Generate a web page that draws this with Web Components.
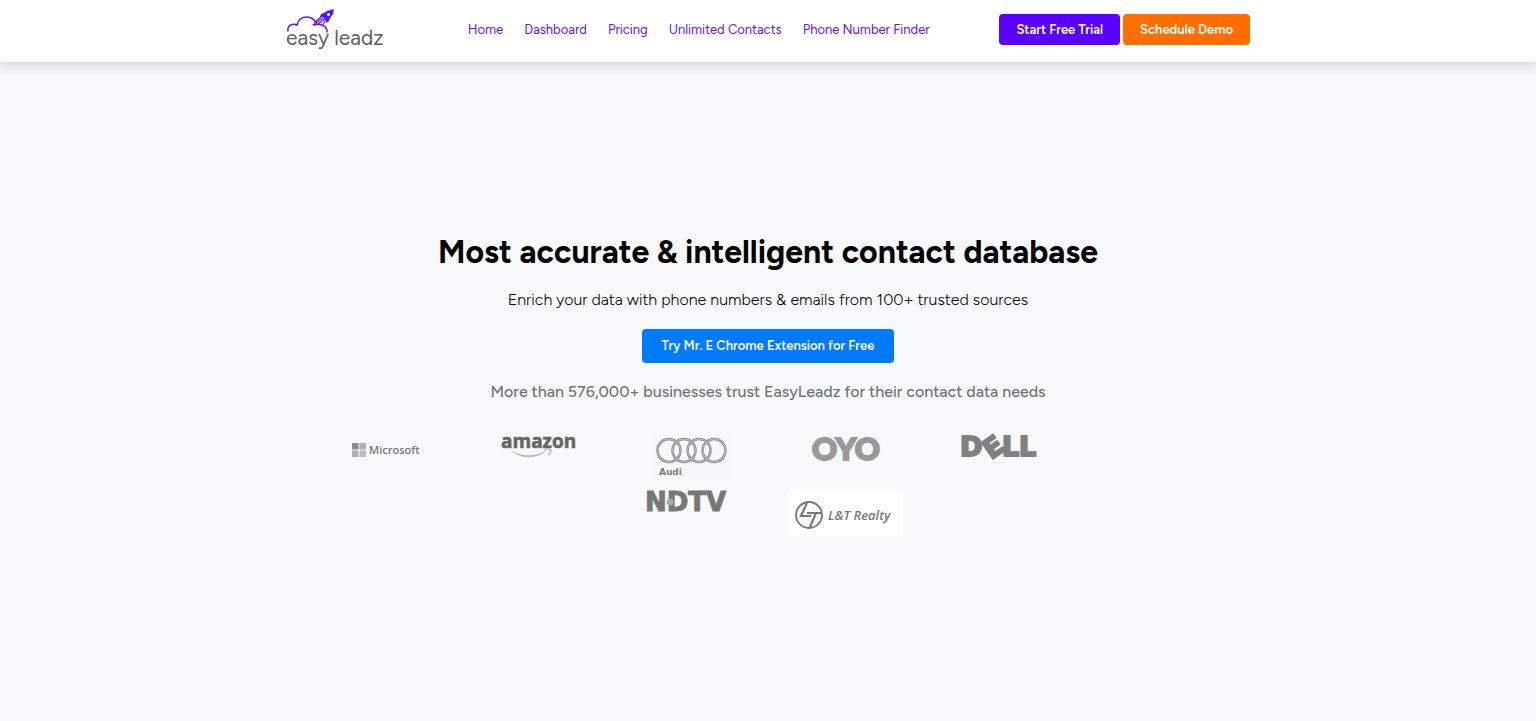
<!DOCTYPE html>
<html lang="en">
<head>
<meta charset="utf-8">
<meta name="viewport" content="width=device-width, initial-scale=1">
<title>EasyLeadz</title>
<style>
  body {
    margin: 0;
    min-height: 100vh;
    background-color: #f8f9fb;
    color: #000;
    font-family: Figtree, Lato, sans-serif;
    font-size: 13px;
  }
</style>
</head>
<body>
<site-header>
  <site-logo slot="logo"></site-logo>
  <nav-link href="#home">Home</nav-link>
  <nav-link href="#dashboard">Dashboard</nav-link>
  <nav-link href="#pricing">Pricing</nav-link>
  <nav-link href="#unlimited">Unlimited Contacts</nav-link>
  <nav-link href="#finder">Phone Number Finder</nav-link>
  <action-button slot="actions" style="--color: #5a00ff">Start Free Trial</action-button>
  <action-button slot="actions" style="--color: #ff6f00">Schedule Demo</action-button>
</site-header>
<hero-section>
  <span slot="title">Most accurate &amp; intelligent contact database</span>
  <span slot="subtitle">Enrich your data with phone numbers &amp; emails from 100+ trusted sources</span>
  <action-button slot="action" style="--color: #007bff; --pad: 7px 20px 8px">Try Mr. E Chrome Extension for Free</action-button>
  <span slot="note">More than 576,000+ businesses trust EasyLeadz for their contact data needs</span>
  <brand-logo name="microsoft"></brand-logo>
  <brand-logo name="amazon"></brand-logo>
  <brand-logo name="audi"></brand-logo>
  <brand-logo name="oyo"></brand-logo>
  <brand-logo name="dell"></brand-logo>
  <brand-logo name="ndtv" class="row-start"></brand-logo>
  <brand-logo name="lt"></brand-logo>
</hero-section>

<script>
const attach = (el, html) => {
  const template = document.createElement('template');
  template.innerHTML = html;
  el.attachShadow({ mode: 'open' }).appendChild(template.content.cloneNode(true));
};

class SiteHeader extends HTMLElement {
  constructor() {
    super();
    attach(this, `
<style>
  :host {
    display: block;
    position: relative;
    background-color: #fff;
    box-shadow: 0 2px 10px 3px rgba(0, 0, 0, .12);
  }
  header {
    display: flex;
    justify-content: space-between;
    align-items: flex-start;
    max-width: 964px;
    margin: 0 auto;
    padding: 8px 0 9px;
  }
  nav {
    display: flex;
    gap: 21px;
    padding-top: 12px;
  }
  .actions {
    display: flex;
    gap: 3px;
    padding-top: 6px;
  }
</style>
<header>
  <slot name="logo"></slot>
  <nav><slot></slot></nav>
  <div class="actions"><slot name="actions"></slot></div>
</header>`);
  }
}

class SiteLogo extends HTMLElement {
  constructor() {
    super();
    attach(this, `
<style>
  :host { display: block; }
  svg { display: block; }
</style>
<svg width="112" height="45" viewBox="0 0 112 45" role="img" aria-label="easy leadz">
  <g fill="none" stroke="#5a0fff" stroke-width="1.5" stroke-linecap="round">
    <path d="M2 23c-1-5 4-8 9-6 1-5 5-8 10-8 4 0 7 2 9 6"/>
    <path d="M28 17c5-2 13 0 13 7"/>
    <path d="M29 14l6-5M27 17l10-7M32 16l7-5M36 18l3-5" stroke-width="1.100"/>
  </g>
  <path d="M48 1l-7 2-3 2-3 1-1 3 3 0 2.500 3 .5 3 3-2 1-3 3-4z" fill="#5a0fff"/>
  <circle cx="42.500" cy="6.500" r="1.500" fill="#fff"/>
  <text x="0" y="37" font-family="Figtree, Lato, sans-serif" font-size="21" fill="#606060">easy leadz</text>
</svg>`);
  }
}

class NavLink extends HTMLElement {
  constructor() {
    super();
    attach(this, `
<style>
  :host { display: block; }
  a {
    display: block;
    color: #6610f2;
    line-height: 20px;
    text-decoration: none;
    white-space: nowrap;
  }
  a:hover { text-decoration: underline; }
</style>
<a><slot></slot></a>`);
    this.shadowRoot.querySelector('a').href = this.getAttribute('href');
  }
}

class ActionButton extends HTMLElement {
  constructor() {
    super();
    attach(this, `
<style>
  :host { display: inline-block; }
  button {
    display: block;
    border: 0;
    border-radius: 4px;
    padding: var(--pad, 6px 17px);
    background-color: var(--color);
    color: #fff;
    font: inherit;
    font-weight: 600;
    line-height: 19px;
    white-space: nowrap;
    cursor: pointer;
  }
  button:hover { opacity: .9; }
</style>
<button type="button"><slot></slot></button>`);
  }
}

class HeroSection extends HTMLElement {
  constructor() {
    super();
    attach(this, `
<style>
  :host {
    display: block;
    padding: 168px 16px 96px;
    text-align: center;
  }
  h1 {
    margin: 0 0 14px;
    font-size: 32px;
    font-weight: 700;
    line-height: 44px;
  }
  p { margin: 0; line-height: 24px; }
  .subtitle {
    margin-bottom: 17px;
    font-size: 16px;
    font-weight: 300;
  }
  .note {
    margin: 17px 0 28px;
    color: #6c757d;
    font-size: 16px;
    font-weight: 500;
  }
  .brands {
    display: grid;
    grid-template-columns: repeat(6, 1fr);
    row-gap: 11px;
    justify-items: center;
    width: 60vw;
    margin: 0 auto;
  }
  ::slotted(.row-start) { grid-column-start: 3; }
</style>
<h1><slot name="title"></slot></h1>
<p class="subtitle"><slot name="subtitle"></slot></p>
<slot name="action"></slot>
<p class="note"><slot name="note"></slot></p>
<div class="brands"><slot></slot></div>`);
  }
}

const brands = {
  microsoft: `
    <path fill="#8c8c8c" d="M26 11h6.500v6.500H26z"/>
    <path fill="#b0b0b0" d="M33.500 11H40v6.500h-6.500zM26 18.500h6.500V25H26z"/>
    <path fill="#bcbcbc" d="M33.500 18.500H40V25h-6.500z"/>
    <text x="43" y="22" font-family="Open Sans" font-size="11" font-weight="600" fill="#777">Microsoft</text>`,
  amazon: `
    <text x="21" y="16" font-family="Open Sans" font-size="19" font-weight="700" fill="#666" stroke="#666" stroke-width=".6">amazon</text>
    <path d="M31 18c10 7 25 7 36 0-8 9-27 10-36 0z" fill="#b8b8b8"/>
    <path d="M64 18c3-1 6-1 7 0 0 2-1 4-3 5" fill="none" stroke="#b8b8b8" stroke-width="1.300"/>`,
  audi: `
    <path fill="#f7f8f9" d="M18 0h80v47H18z"/>
    <g fill="none" stroke="#858585" stroke-width="2.400">
      <circle cx="36" cy="18.500" r="11.500"/><circle cx="51" cy="18.500" r="11.500"/>
      <circle cx="66" cy="18.500" r="11.500"/><circle cx="81" cy="18.500" r="11.500"/>
    </g>
    <g fill="none" stroke="#d4d4d4" stroke-width=".8">
      <circle cx="36" cy="18.500" r="11.500"/><circle cx="51" cy="18.500" r="11.500"/>
      <circle cx="66" cy="18.500" r="11.500"/><circle cx="81" cy="18.500" r="11.500"/>
    </g>
    <text x="26" y="43" font-family="DejaVu Sans" font-size="9" font-weight="700" fill="#7c7c7c">Audi</text>`,
  oyo: `
    <text x="25" y="28" font-family="Lato" font-size="31" font-weight="900" fill="#999" stroke="#999" stroke-width="2">OYO</text>`,
  dell: `
    <text x="20 51 62 79" y="24 28 24 24" rotate="0 -35 0 0" font-family="DejaVu Sans" font-size="27" font-weight="700" fill="#7e817f" stroke="#7e817f" stroke-width="2">DELL</text>`,
  ndtv: `
    <text x="12" y="20" font-family="DejaVu Sans" font-size="26" font-weight="700" fill="#777" stroke="#777" stroke-width="1">NDTV</text>
    <circle cx="37" cy="11" r="3.500" fill="#aaa"/>`,
  lt: `
    <path fill="#fefefe" d="M0 0h116v47H0z"/>
    <circle cx="22" cy="24" r="13" fill="none" stroke="#777" stroke-width="1.800"/>
    <path d="M20 12l-6 13h10M20 22h14M29 22l-6 14" fill="none" stroke="#777" stroke-width="2.200"/>
    <text x="41" y="29" font-family="Open Sans" font-size="13" font-weight="600" font-style="italic" fill="#777">L&amp;T Realty</text>`,
};

class BrandLogo extends HTMLElement {
  constructor() {
    super();
    const name = this.getAttribute('name');
    attach(this, `
<style>
  :host { display: block; }
  svg { display: block; overflow: visible; }
</style>
<svg width="116" height="48" viewBox="0 0 116 48" role="img" aria-label="${name}">${brands[name]}</svg>`);
  }
}

customElements.define('site-header', SiteHeader);
customElements.define('site-logo', SiteLogo);
customElements.define('nav-link', NavLink);
customElements.define('action-button', ActionButton);
customElements.define('hero-section', HeroSection);
customElements.define('brand-logo', BrandLogo);
</script>
</body>
</html>
